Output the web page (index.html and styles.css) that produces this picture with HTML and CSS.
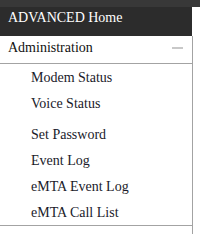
FILE: index.html
```html
<!DOCTYPE html>
<html lang="en">
<head>
  <meta charset="utf-8">
  <title>Advanced</title>
  <link rel="stylesheet" href="styles.css">
</head>
<body>
  <div class="topbar"></div>
  <div class="sidebar">
    <div class="sidebar-title">ADVANCED Home</div>
    <div class="menu">
      <div class="menu-section">
        <span class="section-name">Administration</span>
        <span class="collapse"></span>
      </div>
      <ul class="menu-items">
        <li>Modem Status</li>
        <li>Voice Status</li>
        <li class="group-start">Set Password</li>
        <li>Event Log</li>
        <li>eMTA Event Log</li>
        <li>eMTA Call List</li>
      </ul>
    </div>
  </div>
</body>
</html>
```

FILE: styles.css
```css
html, body {
  margin: 0;
  padding: 0;
  height: 100%;
  overflow: hidden;
}

body {
  font-family: "Liberation Serif", "Times New Roman", serif;
  font-size: 14px;
  color: #111;
  background: #fff;
}

.topbar {
  height: 7px;
  background: #383838;
}

.sidebar {
  width: 193px;
  height: calc(100% - 7px);
  display: flex;
  flex-direction: column;
}

.sidebar-title {
  width: 192px;
  height: 29px;
  box-sizing: border-box;
  padding: 3px 0 0 8px;
  line-height: 16px;
  background: #2c2c2c;
  color: #fff;
}

.menu {
  flex: 1;
  border-right: 1px solid #a3a3a3;
}

/* Administration row */
.menu-section {
  height: 28px;
  box-sizing: border-box;
  padding: 0 9px 3px 8px;
  border-bottom: 1px solid #a3a3a3;
  display: flex;
  align-items: center;
  justify-content: space-between;
}

.collapse {
  width: 11px;
  height: 2px;
  background: #c8c8c8;
}

.menu-items {
  list-style: none;
  margin: 0;
  padding: 0;
  border-bottom: 1px solid #a3a3a3;
}

.menu-items li {
  height: 26px;
  box-sizing: border-box;
  padding: 1px 0 0 31px;
  line-height: 25px;
  color: #1a1a2a;
}

.menu-items li.group-start {
  margin-top: 5px;
}
```
